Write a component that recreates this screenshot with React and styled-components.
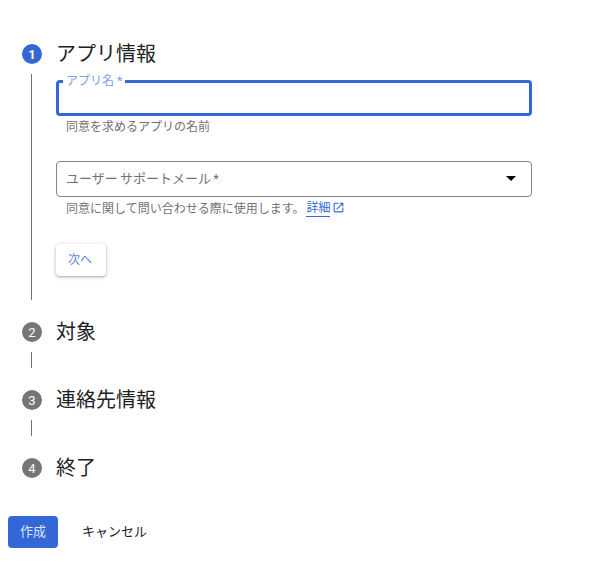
import React from 'react';
import styled, { createGlobalStyle } from 'styled-components';

const GlobalStyle = createGlobalStyle`
  html, body {
    margin: 0;
    padding: 0;
    background: #fff;
  }
  body {
    font-family: Roboto, "Noto Sans CJK JP", sans-serif;
  }
`;

const Page = styled.div`
  width: 603px;
  height: 569px;
  padding-top: 44px;
  box-sizing: border-box;
  overflow: hidden;
`;

const Stepper = styled.div`
  display: flex;
  flex-direction: column;
  padding-left: 22px;
`;

const StepHeader = styled.div`
  display: flex;
  align-items: center;
  gap: 14px;
  height: 20px;
`;

const StepNumber = styled.div`
  width: 20px;
  height: 20px;
  border-radius: 50%;
  display: flex;
  align-items: center;
  justify-content: center;
  background: ${p => (p.$active ? '#3367d6' : '#757575')};
  color: #fff;
  font-size: 13px;
  font-weight: ${p => (p.$active ? 700 : 400)};
`;

const StepTitle = styled.div`
  font-size: 20px;
  line-height: 20px;
  color: #202124;
`;

const Rail = styled.div`
  margin: 10px 0 22px 9px;
  border-left: 1px solid #757575;
  height: ${p => p.$height}px;
  box-sizing: border-box;
`;

const OpenRail = styled(Rail)`
  padding: 6px 0 0 24px;
`;

const Field = styled.div`
  position: relative;
  width: 476px;
  height: 36px;
  box-sizing: border-box;
  border-radius: 4px;
  border: ${p => (p.$focused ? '3px solid #3367d6' : '1px solid #80868b')};
  display: flex;
  align-items: center;
  padding: 0 9px 4px;
`;

const FloatingLabel = styled.span`
  position: absolute;
  left: 4px;
  top: -9px;
  padding: 0 3px;
  background: #fff;
  color: #7d9fe6;
  font-size: 12px;
  line-height: 14px;
`;

const Placeholder = styled.span`
  font-size: 13px;
  word-spacing: -1px;
  color: #6f7276;
`;

const Caret = styled.span`
  position: absolute;
  right: 15px;
  top: 14px;
  width: 0;
  height: 0;
  border-left: 5px solid transparent;
  border-right: 5px solid transparent;
  border-top: 5px solid #000;
`;

const Helper = styled.div`
  display: flex;
  align-items: center;
  height: 16px;
  margin: 1px 0 28px 10px;
  font-size: 12px;
  color: #6f7276;
`;

const HelperLast = styled(Helper)`
  height: 18px;
  margin-bottom: 28px;
`;

const DetailLink = styled.a`
  margin-left: 2px;
  padding: 2px 0 0 0;
  color: #3367d6;
  border-bottom: 1px solid #3367d6;
  line-height: 16px;
`;

const ExternalIcon = styled.svg`
  width: 13px;
  height: 13px;
  margin-left: 2px;
  fill: #3367d6;
`;

const NextButton = styled.button`
  display: block;
  width: 50px;
  height: 32px;
  border: 0;
  border-radius: 4px;
  background: #fff;
  color: #5f86dd;
  font: inherit;
  font-size: 12px;
  padding: 0 2px 3px 0;
  box-shadow: 0 1px 2px rgba(60, 64, 67, 0.3), 0 1px 4px 1px rgba(60, 64, 67, 0.15);
`;

const Actions = styled.div`
  display: flex;
  align-items: center;
  gap: 24px;
  margin: 38px 0 0 8px;
`;

const CreateButton = styled.button`
  width: 50px;
  height: 32px;
  border: 0;
  border-radius: 4px;
  background: #3367d6;
  color: #dbe5fa;
  font: inherit;
  font-size: 13px;
  padding: 0 0 3px;
`;

const CancelButton = styled.button`
  border: 0;
  background: none;
  color: #202124;
  font: inherit;
  font-size: 13px;
  padding: 0 0 3px;
`;

const Step = ({ num, title, active }) => (
  <StepHeader>
    <StepNumber $active={active}>{num}</StepNumber>
    <StepTitle>{title}</StepTitle>
  </StepHeader>
);

export default function App() {
  return (
    <Page>
      <GlobalStyle />
      <Stepper>
        <Step num={1} title="アプリ情報" active />
        <OpenRail $height={226}>
          <Field $focused>
            <FloatingLabel>アプリ名 *</FloatingLabel>
          </Field>
          <Helper>同意を求めるアプリの名前</Helper>
          <Field>
            <Placeholder>ユーザー サポートメール *</Placeholder>
            <Caret />
          </Field>
          <HelperLast>
            同意に関して問い合わせる際に使用します。
            <DetailLink>詳細</DetailLink>
            <ExternalIcon viewBox="0 0 24 24">
              <path d="M19 19H5V5h7V3H5a2 2 0 0 0-2 2v14a2 2 0 0 0 2 2h14a2 2 0 0 0 2-2v-7h-2v7zM14 3v2h3.59l-9.83 9.83 1.41 1.41L19 6.41V10h2V3h-7z" />
            </ExternalIcon>
          </HelperLast>
          <NextButton>次へ</NextButton>
        </OpenRail>
        <Step num={2} title="対象" />
        <Rail $height={16} />
        <Step num={3} title="連絡先情報" />
        <Rail $height={16} />
        <Step num={4} title="終了" />
      </Stepper>
      <Actions>
        <CreateButton>作成</CreateButton>
        <CancelButton>キャンセル</CancelButton>
      </Actions>
    </Page>
  );
}
